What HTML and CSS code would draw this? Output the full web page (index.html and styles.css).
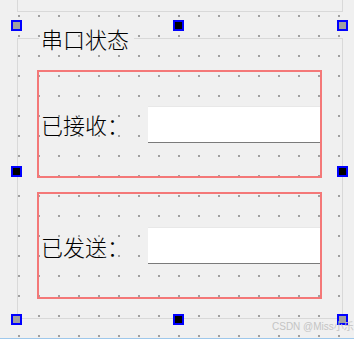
FILE: index.html
```html
<!DOCTYPE html>
<html lang="zh">
<head>
<meta charset="utf-8">
<link rel="stylesheet" href="styles.css">
</head>
<body>
<div class="prev-box"></div>
<fieldset class="group">
  <legend class="group-title">串口状态</legend>
  <div class="layout-box first">
    <span class="label">已接收：</span>
    <div class="line-edit"></div>
  </div>
  <div class="layout-box second">
    <span class="label">已发送：</span>
    <div class="line-edit"></div>
  </div>
</fieldset>

<span class="handle corner h-tl"></span>
<span class="handle mid h-tm"></span>
<span class="handle corner h-tr"></span>
<span class="handle mid h-ml"></span>
<span class="handle mid h-mr"></span>
<span class="handle corner h-bl"></span>
<span class="handle mid h-bm"></span>
<span class="handle corner h-br"></span>

<span class="watermark">CSDN @Miss小乐</span>
</body>
</html>
```

FILE: styles.css
```css
html {
  background: #f0f0f0;
}

body {
  margin: 0;
  height: 338px;
  border-bottom: 1px solid #9ec8ec;
  overflow: hidden;
  position: relative;
  font-family: "Noto Sans CJK SC", "Noto Sans", sans-serif;
  color: #000;
  background-color: #f0f0f0;
  background-image: conic-gradient(at 2px 2px, transparent 75%, #a0a0a0 0);
  background-size: 20px 20px;
  background-position: 18px 15px;
}

.prev-box {
  box-sizing: border-box;
  width: 326px;
  height: 12px;
  margin-left: 17px;
  border: 1px solid #d9d9d9;
  border-top: none;
}

.group {
  box-sizing: border-box;
  width: 326px;
  margin: 14px 0 0 17px;
  padding: 20px 0 19px 19px;
  border: 1px solid #d9d9d9;
  min-inline-size: 0;
  display: flex;
  flex-direction: column;
  gap: 14px;
}

.group-title {
  margin-left: 2px;
  padding: 0 5px 0 2px;
  font-size: 22px;
  line-height: 24px;
  font-weight: 300;
}

.layout-box {
  box-sizing: border-box;
  width: 285px;
  border: 2px solid #f47878;
  display: flex;
  align-items: center;
  padding-left: 2px;
}

.layout-box.first {
  height: 108px;
}

.layout-box.second {
  height: 107px;
}

.label {
  flex: 1;
  font-size: 22px;
  line-height: 24px;
  font-weight: 300;
}

.line-edit {
  box-sizing: border-box;
  width: 172px;
  height: 37px;
  background: #fff;
  border-top: 1px solid #e8e8e8;
  border-bottom: 1px solid #7a7a7a;
}

.handle {
  position: absolute;
  box-sizing: border-box;
  width: 11px;
  height: 11px;
  border: 2px solid #0000ff;
}

.handle.corner {
  background: #a0a0a0;
}

.handle.mid {
  background: #000;
}

.h-tl { left: 11px; top: 20px; }
.h-tm { left: 173px; top: 20px; }
.h-tr { left: 337px; top: 20px; }
.h-ml { left: 11px; top: 166px; }
.h-mr { left: 337px; top: 166px; }
.h-bl { left: 11px; top: 314px; }
.h-bm { left: 173px; top: 314px; }
.h-br { left: 337px; top: 314px; }

.watermark {
  position: absolute;
  left: 272px;
  top: 320px;
  font-family: "Liberation Sans", "Noto Sans CJK SC", sans-serif;
  font-size: 10px;
  line-height: 14px;
  color: #c4c4c4;
  white-space: nowrap;
}
```
